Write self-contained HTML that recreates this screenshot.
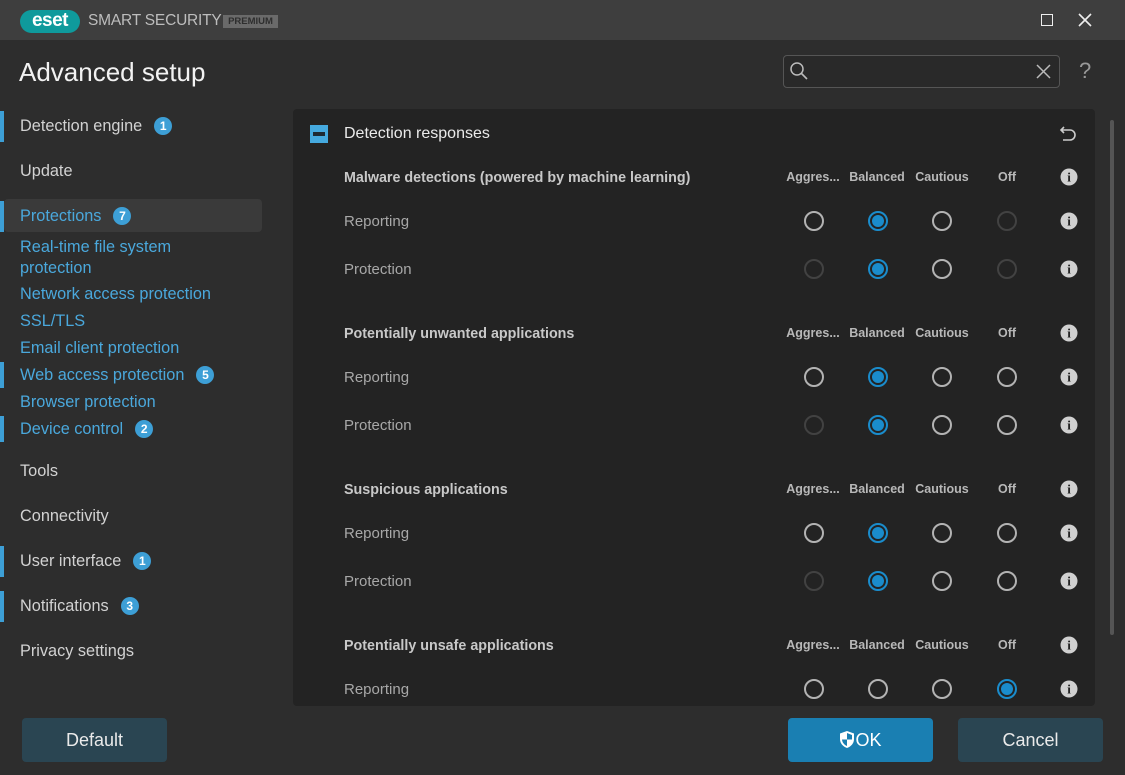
<!DOCTYPE html>
<html><head><meta charset="utf-8"><style>
*{margin:0;padding:0;box-sizing:border-box}
body{width:1125px;height:775px;background:#2d2d2d;font-family:"Liberation Sans",sans-serif;position:relative;overflow:hidden;color:#e0e0e0}
.a{position:absolute}
.tb{left:0;top:0;width:1125px;height:40px;background:#3e3e3e}
.side{font-size:16.3px;white-space:nowrap}
.side div{position:absolute;left:20px}
.g{color:#d2d2d2}
.b{color:#4aa8dc}
.bar{position:absolute;left:0;width:4px;background:#3d9fd6}
.badge{display:inline-block;width:18px;height:18px;border-radius:50%;background:#3d9fd6;color:#fff;font-size:12px;font-weight:bold;text-align:center;line-height:18px;margin-left:12px;vertical-align:1px}
.panel{left:293px;top:109px;width:802px;height:597px;background:#232323;border-radius:4px}
.gh{position:absolute;left:344px;font-size:14.3px;font-weight:bold;color:#c8c8c8}
.rl{position:absolute;left:344px;font-size:15px;color:#a8a8a8}
.ch{position:absolute;font-size:12.5px;font-weight:bold;color:#b8b8b8;transform:translateX(-50%)}
.r{position:absolute;width:20px;height:20px;border-radius:50%;border:2px solid #b3b3b3;transform:translate(-50%,-50%)}
.r.d{border-color:#424242}
.r.s{border-color:#1a8ccc}
.r.s:after{content:"";position:absolute;left:2px;top:2px;width:12px;height:12px;border-radius:50%;background:#1a8ccc}
.i{position:absolute;width:17px;height:17px;border-radius:50%;background:#d0d0d0;color:#232323;font-size:13px;font-weight:bold;font-family:"Liberation Serif",serif;text-align:center;line-height:17px;transform:translate(-50%,-50%)}
.btn{position:absolute;top:718px;height:44px;border-radius:4px;font-size:18px;color:#eaeaea;text-align:center;line-height:44px}
</style></head><body>
<div class="a tb"></div>
<div class="a" style="left:20px;top:10px;width:60px;height:23px;background:#0f9a9c;border-radius:12px;color:#fff;font-weight:bold;font-size:19px;line-height:22px;text-align:center;letter-spacing:-0.5px">eset</div>
<div class="a" style="left:88px;top:12px;font-size:15.5px;color:#bdbdbd;letter-spacing:-0.2px">SMART SECURITY</div>
<div class="a" style="left:223px;top:15px;width:55px;height:13px;background:#6a6a6a;color:#2e2e2e;font-size:9.5px;font-weight:bold;line-height:13px;text-align:center">PREMIUM</div>
<div class="a" style="left:1041px;top:14px;width:12px;height:12px;border:1.5px solid #eee"></div>
<svg class="a" style="left:1078px;top:13px" width="14" height="14"><path d="M1 1L13 13M13 1L1 13" stroke="#eee" stroke-width="1.6"/></svg>
<div class="a" style="left:19px;top:57px;font-size:26px;color:#f2f2f2">Advanced setup</div>
<div class="a" style="left:783px;top:55px;width:277px;height:33px;border:1px solid #555;border-radius:4px;background:#292929"></div>
<svg class="a" style="left:789px;top:61px" width="20" height="20"><circle cx="8" cy="8" r="6" fill="none" stroke="#bbb" stroke-width="1.5"/><path d="M12.5 12.5L18 18" stroke="#bbb" stroke-width="1.6"/></svg>
<svg class="a" style="left:1036px;top:64px" width="15" height="15"><path d="M1 1L14 14M14 1L1 14" stroke="#bbb" stroke-width="1.5"/></svg>
<div class="a" style="left:1079px;top:58px;font-size:22px;color:#999">?</div>

<div class="side">
<div class="g" style="top:117px">Detection engine<span class="badge">1</span></div>
<div class="g" style="top:162px">Update</div>
<div class="a" style="left:4px;top:199px;width:258px;height:33px;background:#3a3a3a;border-radius:4px"></div>
<div class="b" style="top:207px">Protections<span class="badge">7</span></div>
<div class="b" style="top:237px;line-height:21px">Real-time file system<br>protection</div>
<div class="b" style="top:285px">Network access protection</div>
<div class="b" style="top:312px">SSL/TLS</div>
<div class="b" style="top:339px">Email client protection</div>
<div class="b" style="top:366px">Web access protection<span class="badge">5</span></div>
<div class="b" style="top:393px">Browser protection</div>
<div class="b" style="top:420px">Device control<span class="badge">2</span></div>
<div class="g" style="top:462px">Tools</div>
<div class="g" style="top:507px">Connectivity</div>
<div class="g" style="top:552px">User interface<span class="badge">1</span></div>
<div class="g" style="top:597px">Notifications<span class="badge">3</span></div>
<div class="g" style="top:642px">Privacy settings</div>
</div>
<div class="bar" style="top:111px;height:31px"></div>
<div class="bar" style="top:201px;height:31px"></div>
<div class="bar" style="top:362px;height:26px"></div>
<div class="bar" style="top:416px;height:26px"></div>
<div class="bar" style="top:546px;height:31px"></div>
<div class="bar" style="top:591px;height:31px"></div>

<div class="a panel"></div>
<div class="a" style="left:1110px;top:120px;width:4px;height:515px;background:#555;border-radius:2px"></div>
<div class="a" style="left:310px;top:125px;width:18px;height:18px;background:#45a9de"></div>
<div class="a" style="left:313px;top:132px;width:12px;height:4px;background:#1e2a33"></div>
<div class="a" style="left:344px;top:125px;font-size:16px;color:#eaeaea">Detection responses</div>
<svg class="a" style="left:1059px;top:124px" width="18" height="18"><path d="M5 3L2 6L5 9M2 6H11A5 5 0 0 1 11 16H4" fill="none" stroke="#ccc" stroke-width="1.6"/></svg>

<div class="gh" style="top:170px">Malware detections (powered by machine learning)</div>
<div class="gh" style="top:326px">Potentially unwanted applications</div>
<div class="gh" style="top:482px">Suspicious applications</div>
<div class="gh" style="top:638px">Potentially unsafe applications</div>

<div class="rl" style="top:213px">Reporting</div><div class="rl" style="top:261px">Protection</div>
<div class="rl" style="top:369px">Reporting</div><div class="rl" style="top:417px">Protection</div>
<div class="rl" style="top:525px">Reporting</div><div class="rl" style="top:573px">Protection</div>
<div class="rl" style="top:681px">Reporting</div>

<div class="ch" style="left:813px;top:170px">Aggres...</div><div class="ch" style="left:877px;top:170px">Balanced</div><div class="ch" style="left:942px;top:170px">Cautious</div><div class="ch" style="left:1007px;top:170px">Off</div>
<div class="ch" style="left:813px;top:326px">Aggres...</div><div class="ch" style="left:877px;top:326px">Balanced</div><div class="ch" style="left:942px;top:326px">Cautious</div><div class="ch" style="left:1007px;top:326px">Off</div>
<div class="ch" style="left:813px;top:482px">Aggres...</div><div class="ch" style="left:877px;top:482px">Balanced</div><div class="ch" style="left:942px;top:482px">Cautious</div><div class="ch" style="left:1007px;top:482px">Off</div>
<div class="ch" style="left:813px;top:638px">Aggres...</div><div class="ch" style="left:877px;top:638px">Balanced</div><div class="ch" style="left:942px;top:638px">Cautious</div><div class="ch" style="left:1007px;top:638px">Off</div>

<div class="i" style="left:1069px;top:177px">i</div><div class="i" style="left:1069px;top:221px">i</div><div class="i" style="left:1069px;top:269px">i</div>
<div class="i" style="left:1069px;top:333px">i</div><div class="i" style="left:1069px;top:377px">i</div><div class="i" style="left:1069px;top:425px">i</div>
<div class="i" style="left:1069px;top:489px">i</div><div class="i" style="left:1069px;top:533px">i</div><div class="i" style="left:1069px;top:581px">i</div>
<div class="i" style="left:1069px;top:645px">i</div><div class="i" style="left:1069px;top:689px">i</div>

<div class="r" style="left:814px;top:221px"></div><div class="r s" style="left:878px;top:221px"></div><div class="r" style="left:942px;top:221px"></div><div class="r d" style="left:1007px;top:221px"></div>
<div class="r d" style="left:814px;top:269px"></div><div class="r s" style="left:878px;top:269px"></div><div class="r" style="left:942px;top:269px"></div><div class="r d" style="left:1007px;top:269px"></div>
<div class="r" style="left:814px;top:377px"></div><div class="r s" style="left:878px;top:377px"></div><div class="r" style="left:942px;top:377px"></div><div class="r" style="left:1007px;top:377px"></div>
<div class="r d" style="left:814px;top:425px"></div><div class="r s" style="left:878px;top:425px"></div><div class="r" style="left:942px;top:425px"></div><div class="r" style="left:1007px;top:425px"></div>
<div class="r" style="left:814px;top:533px"></div><div class="r s" style="left:878px;top:533px"></div><div class="r" style="left:942px;top:533px"></div><div class="r" style="left:1007px;top:533px"></div>
<div class="r d" style="left:814px;top:581px"></div><div class="r s" style="left:878px;top:581px"></div><div class="r" style="left:942px;top:581px"></div><div class="r" style="left:1007px;top:581px"></div>
<div class="r" style="left:814px;top:689px"></div><div class="r" style="left:878px;top:689px"></div><div class="r" style="left:942px;top:689px"></div><div class="r s" style="left:1007px;top:689px"></div>

<div class="btn" style="left:22px;width:145px;background:#2a4552">Default</div>
<div class="btn" style="left:788px;width:145px;background:#1a7fb2;color:#fff"><svg width="16" height="19" style="vertical-align:-3px" viewBox="0 0 16 19"><path d="M8 1L15 3.5V9C15 13.5 12 16.5 8 18C4 16.5 1 13.5 1 9V3.5Z" fill="#fff"/><path d="M8 3L13 5V9.5H8ZM8 9.5V16C5 14.7 3.2 12.3 3 9.5Z" fill="#1a7fb2"/></svg>OK</div>
<div class="btn" style="left:958px;width:145px;background:#2a4552">Cancel</div>
</body></html>
